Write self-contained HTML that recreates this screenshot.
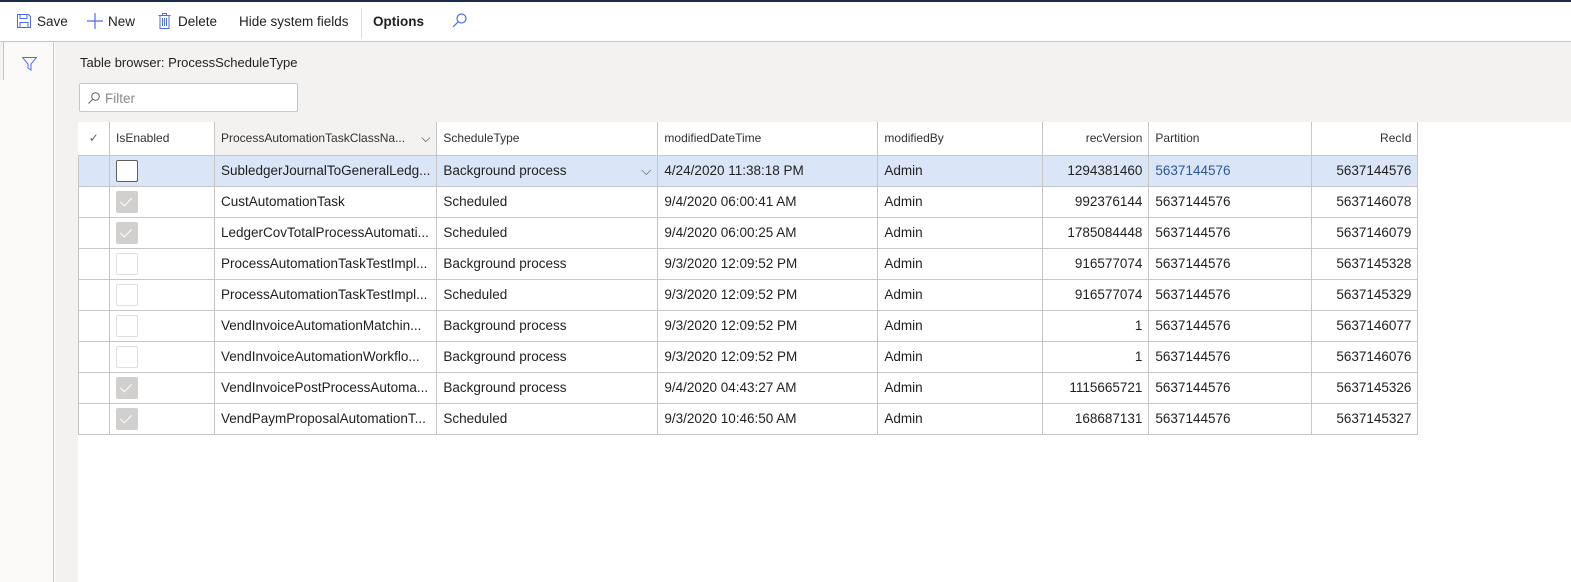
<!DOCTYPE html><html><head><style>
*{box-sizing:border-box;margin:0;padding:0}
body{width:1571px;height:582px;overflow:hidden;background:#fff;font-family:"Liberation Sans",sans-serif;font-size:13px;color:#201f1e;position:relative}
.top{position:absolute;left:0;top:0;width:1571px;height:2px;background:#1b2a47}
.tb{position:absolute;left:0;top:2px;width:1571px;height:40px;border-bottom:1px solid #c8c6c4;background:#fff}
.tb span{position:absolute;top:12px;font-size:13.5px}
.lnav{position:absolute;left:0;top:42px;width:54px;height:540px;background:#faf9f8;border-right:1px solid #c8c6c4}
.lnav .s{position:absolute;left:0;top:0;width:4px;height:540px;border-right:1px solid #c8c6c4;background:#fff}
.gray{position:absolute;left:55px;top:42px;width:1516px;height:80px;background:#f3f2f1}
.gray2{position:absolute;left:55px;top:122px;width:23px;height:460px;background:#f3f2f1}
.title{position:absolute;left:80px;top:55px;font-size:13px}
.filter{position:absolute;left:79px;top:83px;width:219px;height:29px;background:#fff;border:1px solid #c8c6c4;border-radius:2px;color:#8a8886;padding:7px 0 0 25px;font-size:13.5px}
table{position:absolute;left:78px;top:122px;border-collapse:collapse;table-layout:fixed;font-size:13.5px}
td,th{border:1px solid #c8c6c4;height:31px;padding:0 6px;white-space:nowrap;overflow:hidden;text-overflow:ellipsis;font-weight:normal;text-align:left}
th{font-size:12px;color:#323130;height:33px;border-top:none}
.r{text-align:right}
tr.sel td{background:#dbe5f8}
.cb{display:inline-block;width:22px;height:22px;border-radius:2px;vertical-align:middle;position:relative}
.cb.on{background:#d2d0ce}
.cb.on:after{content:"";position:absolute;left:7px;top:4px;width:5px;height:10px;border:solid #fff;border-width:0 1.5px 1.5px 0;transform:rotate(45deg)}
.cb.off{border:1px solid #e1dfdd}
.cb.emp{border:1px solid #605e5c;background:#fff}
</style></head><body>
<div class="top"></div>
<div class="tb">
<svg style="position:absolute;left:17px;top:12px" width="14" height="14" viewBox="0 0 14 14" fill="none" stroke="#4f6bed" stroke-width="1"><path d="M.5 .5h11l2 2v11H.5z M3 .5v4h7v-4 M3 13.5v-5h8v5"/></svg>
<span style="left:37px">Save</span>
<svg style="position:absolute;left:87px;top:11px" width="16" height="16" stroke="#4f6bed" stroke-width="1.2"><path d="M8 0v16M0 8h16"/></svg>
<span style="left:108px">New</span>
<svg style="position:absolute;left:158px;top:11px" width="13" height="16" fill="none" stroke="#4f6bed" stroke-width="1"><path d="M.5 2.5h12M4.5 2.5V.5h4v2M2 2.5v13h9v-13M4.5 5v8M6.5 5v8M8.5 5v8"/></svg>
<span style="left:178px">Delete</span>
<span style="left:239px">Hide system fields</span>
<div style="position:absolute;left:361px;top:6px;width:1px;height:30px;background:#e1dfdd"></div>
<span style="left:373px;font-weight:bold">Options</span>
<svg style="position:absolute;left:452px;top:11px" width="15" height="15" fill="none" stroke="#4f6bed" stroke-width="1.2"><circle cx="9.5" cy="5.5" r="4.5"/><path d="M6.3 8.7L1 14"/></svg>
</div>
<div class="lnav"><div class="s" style="height:38px;background:#f3f2f1"></div>
<svg style="position:absolute;left:22px;top:14px" width="15" height="15" fill="none" stroke="#4f6bed" stroke-width="1"><path d="M.5 1.5h14l-5.5 6.5v6l-3-2v-4z"/></svg></div>
<div class="gray"></div><div class="gray2"></div>
<div class="title">Table browser: ProcessScheduleType</div>
<div class="filter"><svg style="position:absolute;left:8px;top:8px" width="12" height="12" fill="none" stroke="#605e5c" stroke-width="1"><circle cx="7.5" cy="4.5" r="3.8"/><path d="M4.8 7.2L.5 11.5"/></svg>Filter</div>
<table>
<colgroup><col style="width:31px"><col style="width:105px"><col style="width:221px"><col style="width:221px"><col style="width:220px"><col style="width:165px"><col style="width:106px"><col style="width:163px"><col style="width:106px"></colgroup>
<tr><th style="border-left:none;text-align:center;color:#605e5c">✓</th><th>IsEnabled</th><th style="background:#f3f2f1">ProcessAutomationTaskClassNa... <span style="float:right">⌵</span></th><th>ScheduleType</th><th>modifiedDateTime</th><th>modifiedBy</th><th class="r">recVersion</th><th>Partition</th><th class="r">RecId</th></tr>
<tr class="sel"><td></td><td><span class="cb emp"></span></td><td>SubledgerJournalToGeneralLedg...</td><td>Background process<span style="float:right;color:#605e5c">⌵</span></td><td>4/24/2020 11:38:18 PM</td><td>Admin</td><td class="r">1294381460</td><td style="color:#2b579a">5637144576</td><td class="r">5637144576</td></tr>
<tr><td></td><td><span class="cb on"></span></td><td>CustAutomationTask</td><td>Scheduled</td><td>9/4/2020 06:00:41 AM</td><td>Admin</td><td class="r">992376144</td><td>5637144576</td><td class="r">5637146078</td></tr>
<tr><td></td><td><span class="cb on"></span></td><td>LedgerCovTotalProcessAutomati...</td><td>Scheduled</td><td>9/4/2020 06:00:25 AM</td><td>Admin</td><td class="r">1785084448</td><td>5637144576</td><td class="r">5637146079</td></tr>
<tr><td></td><td><span class="cb off"></span></td><td>ProcessAutomationTaskTestImpl...</td><td>Background process</td><td>9/3/2020 12:09:52 PM</td><td>Admin</td><td class="r">916577074</td><td>5637144576</td><td class="r">5637145328</td></tr>
<tr><td></td><td><span class="cb off"></span></td><td>ProcessAutomationTaskTestImpl...</td><td>Scheduled</td><td>9/3/2020 12:09:52 PM</td><td>Admin</td><td class="r">916577074</td><td>5637144576</td><td class="r">5637145329</td></tr>
<tr><td></td><td><span class="cb off"></span></td><td>VendInvoiceAutomationMatchin...</td><td>Background process</td><td>9/3/2020 12:09:52 PM</td><td>Admin</td><td class="r">1</td><td>5637144576</td><td class="r">5637146077</td></tr>
<tr><td></td><td><span class="cb off"></span></td><td>VendInvoiceAutomationWorkflo...</td><td>Background process</td><td>9/3/2020 12:09:52 PM</td><td>Admin</td><td class="r">1</td><td>5637144576</td><td class="r">5637146076</td></tr>
<tr><td></td><td><span class="cb on"></span></td><td>VendInvoicePostProcessAutoma...</td><td>Background process</td><td>9/4/2020 04:43:27 AM</td><td>Admin</td><td class="r">1115665721</td><td>5637144576</td><td class="r">5637145326</td></tr>
<tr><td></td><td><span class="cb on"></span></td><td>VendPaymProposalAutomationT...</td><td>Scheduled</td><td>9/3/2020 10:46:50 AM</td><td>Admin</td><td class="r">168687131</td><td>5637144576</td><td class="r">5637145327</td></tr>
</table>
</body></html>
